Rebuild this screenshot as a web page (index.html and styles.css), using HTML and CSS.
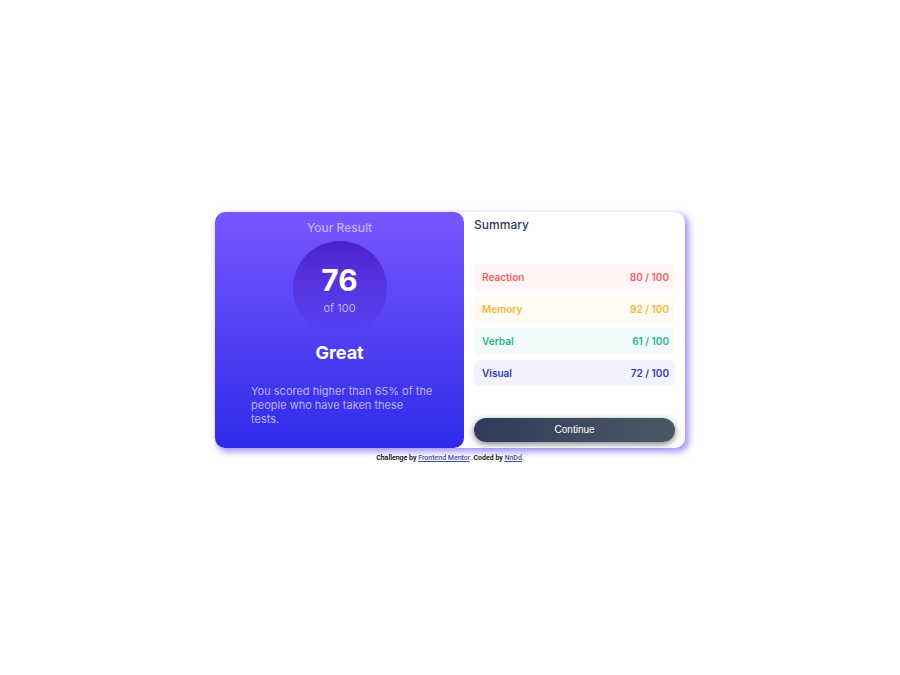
FILE: index.html
```html
<!DOCTYPE html>
<html lang="en">
<head>
  <meta charset="UTF-8">
  <meta name="viewport" content="width=device-width, initial-scale=1.0">
  <title>Results summary component</title>
  <link rel="stylesheet" href="styles.css">
</head>
<body>
  <main class="card">
    <section class="result">
      <h1 class="result-title">Your Result</h1>
      <div class="score">
        <span class="score-value">76</span>
        <span class="score-total">of 100</span>
      </div>
      <h2 class="grade">Great</h2>
      <p class="result-text">You scored higher than 65% of the people who have taken these tests.</p>
    </section>

    <section class="summary">
      <h2 class="summary-title">Summary</h2>
      <ul class="summary-list">
        <li class="item reaction"><span>Reaction</span><span>80 / 100</span></li>
        <li class="item memory"><span>Memory</span><span>92 / 100</span></li>
        <li class="item verbal"><span>Verbal</span><span>61 / 100</span></li>
        <li class="item visual"><span>Visual</span><span>72 / 100</span></li>
      </ul>
      <button class="btn" type="button">Continue</button>
    </section>
  </main>

  <footer class="attribution">
    Challenge by <a href="https://www.frontendmentor.io">Frontend Mentor</a>.
    Coded by <a href="#">NnDd</a>.
  </footer>
</body>
</html>
```
FILE: styles.css
```css
* {
  box-sizing: border-box;
  margin: 0;
  padding: 0;
}

body {
  min-height: 100vh;
  display: flex;
  flex-direction: column;
  align-items: center;
  justify-content: center;
  font-family: Inter, "Liberation Sans", sans-serif;
  font-size: 11px;
  background-color: #fff;
}

.card {
  display: flex;
  width: 100%;
  max-width: 470px;
  border-radius: 10px;
  box-shadow: 3px 3px 6px 1px rgba(112, 80, 250, 0.6);
}

/* left side */
.result {
  flex: 0 0 53%;
  display: flex;
  flex-direction: column;
  align-items: center;
  padding: 8px 0 22px;
  border-radius: 10px;
  color: #fff;
  background: linear-gradient(#7857ff, #2e2be9);
}

.result-title {
  font-size: 12px;
  font-weight: 500;
  line-height: 16px;
  color: #bdb2fb;
}

.score {
  display: flex;
  flex-direction: column;
  align-items: center;
  justify-content: center;
  width: 94px;
  height: 94px;
  margin-top: 5px;
  border-radius: 50%;
  background: linear-gradient(#4d21c9, rgba(37, 33, 201, 0));
}

.score-value {
  font-size: 30px;
  font-weight: 700;
  line-height: 40px;
}

.score-total {
  line-height: 16px;
  color: #bdb2fb;
}

.grade {
  margin-top: 6px;
  font-size: 18px;
  font-weight: 700;
  line-height: 24px;
}

.result-text {
  margin: 19px 30px 0 36px;
  line-height: 14px;
  color: #bdb2fb;
}

/* right side */
.summary {
  flex: 1;
  display: flex;
  flex-direction: column;
  justify-content: space-between;
  padding: 5px 10px 6px;
}

.summary-title {
  font-size: 12px;
  font-weight: 500;
  line-height: 16px;
  color: #303b59;
}

.summary-list {
  display: flex;
  flex-direction: column;
  gap: 6px;
  list-style: none;
}

.item {
  display: flex;
  justify-content: space-between;
  padding: 5px 6px 5px 8px;
  border-radius: 5px;
  font-size: 10px;
  font-weight: 600;
  line-height: 16px;
}

.reaction {
  color: #e66468;
  background-color: #fff5f5;
}

.memory {
  color: #efb83f;
  background-color: #fffaf2;
}

.verbal {
  color: #2bb38e;
  background-color: #f2fbfa;
}

.visual {
  color: #3139ac;
  background-color: #f3f3fd;
}

.btn {
  height: 24px;
  border: none;
  border-radius: 12px;
  font-family: "Liberation Sans", Arial, sans-serif;
  font-size: 10px;
  color: #fff;
  background: linear-gradient(to right, #303b59, #4a5963);
  box-shadow: 0 2px 6px rgba(30, 40, 50, 0.6);
  cursor: pointer;
}

.attribution {
  padding-top: 5px;
  font-family: Roboto, "Liberation Sans", sans-serif;
  font-size: 7px;
  font-weight: 500;
  line-height: 11px;
  text-align: center;
}

.attribution a {
  color: #3e52a3;
}
```
